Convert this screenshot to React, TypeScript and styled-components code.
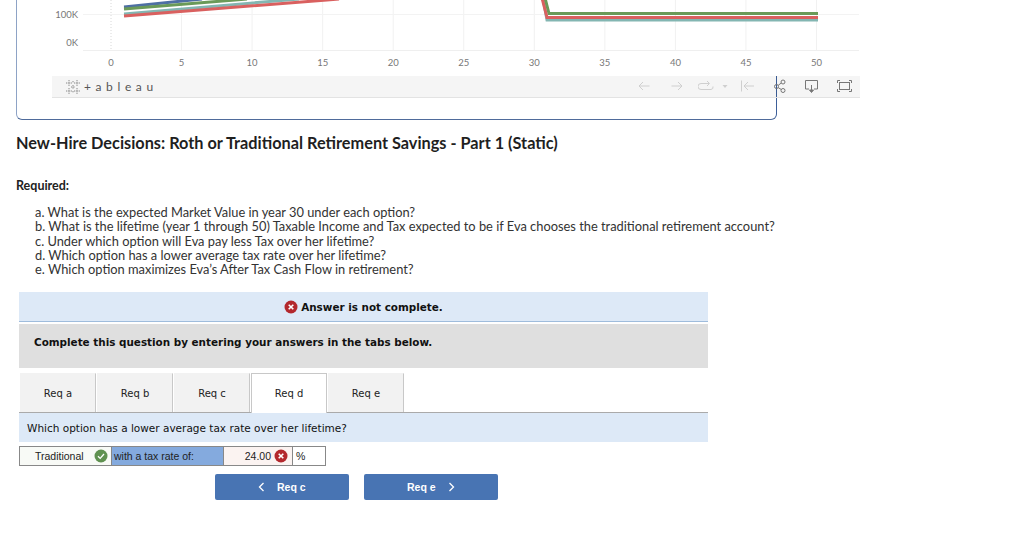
import * as React from 'react';
import styled, { createGlobalStyle } from 'styled-components';

const GlobalStyle = createGlobalStyle`
  html, body {
    margin: 0;
    padding: 0;
    background: #fff;
    overflow: hidden;
  }
`
const Page = styled.div`
  width: 1024px;
  height: 534px;
  overflow: hidden;
  padding-left: 16px;
  box-sizing: border-box;
  font-family: "Lato", sans-serif;
  color: #222;
`
const VizCard = styled.div`
  width: 761px;
  height: 120px;
  box-sizing: border-box;
  border: 1px solid #8ea3c6;
  border-top: 0;
  border-right-color: #3d5f99;
  border-bottom-color: #4f6b9b;
  border-radius: 0 0 6px 6px;
  padding-left: 35px;
`
const Viz = styled.div`
  width: 808px;
`
const ChartSvg = styled.svg`
  display: block;
  background: #fff;
  font-family: "Lato", sans-serif;
`
const Toolbar = styled.div`
  height: 22px;
  box-sizing: border-box;
  background: rgba(0, 0, 0, 0.04);
  border-bottom: 1px solid #e3e3e3;
  display: flex;
  align-items: center;
  padding-left: 14px;
  color: #555;
`
const Brand = styled.span`
  margin-left: 4px;
  font: 400 12px "Lato", sans-serif;
  letter-spacing: 4.6px;
  color: #555;
`
const ToolIcons = styled.div`
  margin-left: auto;
  display: flex;
  align-items: center;
  margin-top: -1px;
`
const Title = styled.h2`
  margin: 13px 0 0;
  font-size: 16.3px;
  line-height: 20px;
  font-weight: 700;
  color: #1f1f1f;
`
const Required = styled.div`
  margin-top: 25px;
  font-size: 12.5px;
  line-height: 16px;
  font-weight: 700;
`
const QuestionList = styled.ol`
  list-style: none;
  margin: 11px 0 0;
  padding: 0 0 0 19px;
  font-size: 12.85px;
  line-height: 14.25px;
  color: #333;
`
const Panel = styled.div`
  width: 689px;
  margin: 16px 0 0 3px;
`
const Notice = styled.div`
  height: 30px;
  box-sizing: border-box;
  background: #dde9f7;
  border-bottom: 1px solid #9fbcdc;
  display: flex;
  align-items: center;
  justify-content: center;
  gap: 3px;
  font: 700 10.4px "DejaVu Sans", sans-serif;
  color: #111;
`
const Instructions = styled.div`
  height: 44px;
  margin-top: 2px;
  box-sizing: border-box;
  background: #dfdfdf;
  padding: 11px 0 0 15px;
  font: 700 10.4px/14px "DejaVu Sans", sans-serif;
  color: #111;
`
const Tabs = styled.div`
  display: flex;
  gap: 1px;
  margin-top: 5px;
  height: 39px;
  padding-left: 1px;
  border-bottom: 1px solid #aaa;
`
const Tab = styled.div<{ $active?: boolean }>`
  width: 76px;
  height: ${p => (p.$active ? '40px' : '39px')};
  box-sizing: border-box;
  background: ${p => (p.$active ? '#fff' : '#f2f2f2')};
  border: 1px solid ${p => (p.$active ? '#c8c8c8' : '#f2f2f2')};
  border-right-color: #c8c8c8;
  border-bottom: 0;
  display: flex;
  align-items: center;
  justify-content: center;
  font: 400 10px "DejaVu Sans", sans-serif;
  color: #222;
`
const Prompt = styled.div`
  height: 29px;
  background: #dde9f7;
  display: flex;
  align-items: center;
  padding-left: 8px;
  font: 400 10.5px "DejaVu Sans", sans-serif;
  color: #111;
`
const AnswerRow = styled.div`
  display: flex;
  width: 307px;
  height: 20px;
  margin-top: 4px;
  box-sizing: border-box;
  border: 1px solid #888;
  font: 400 10.5px "Liberation Sans", sans-serif;
  color: #222;
`
const Cell = styled.div<{ $width: number; $bg: string }>`
  width: ${p => p.$width}px;
  background: ${p => p.$bg};
  display: flex;
  align-items: center;
  box-sizing: border-box;
  border-right: 1px solid #888;
  &:last-child { border-right: 0; }
`
const TraditionalCell = styled(Cell)`
  padding-left: 15px;
  gap: 10px;
`
const LabelCell = styled(Cell)`
  padding-left: 2px;
`
const RateCell = styled(Cell)`
  justify-content: flex-end;
  padding-right: 4px;
  gap: 3px;
`
const UnitCell = styled(Cell)`
  padding-left: 3px;
`
const Buttons = styled.div`
  display: flex;
  gap: 15.5px;
  margin: 8px 0 0 196px;
`
const NavButton = styled.button`
  width: 133.5px;
  height: 26px;
  border: 0;
  border-radius: 2px;
  background: #4874b3;
  color: #fff;
  font: 700 10.5px "Liberation Sans", sans-serif;
  display: flex;
  align-items: center;
  justify-content: center;
  gap: 12px;
  padding: 0;
`

const xFor = (year: number) => 59 + year * 14.11
const ticks = [0, 5, 10, 15, 20, 25, 30, 35, 40, 45, 50]

const Chart = () => (
  <ChartSvg width={808} height={76} viewBox="0 0 808 76">
    {ticks.slice(1).map(t => (
      <line key={t} x1={xFor(t)} x2={xFor(t)} y1={0} y2={51} stroke="#f1f1f1" />
    ))}
    <line x1={xFor(0)} x2={xFor(0)} y1={0} y2={51} stroke="#d8d8d8" strokeDasharray="1 2" />
    <line x1={31} x2={807} y1={14.5} y2={14.5} stroke="#f3f3f3" />
    <line x1={31} x2={807} y1={50.5} y2={50.5} stroke="#efefef" />
    <g fill="none" strokeWidth={3}>
      <polyline stroke="#4e6fa3" points="72,7 140,0 150,-1" />
      <polyline stroke="#6a9a58" points="72,9 183,0 195,-1" />
      <polyline stroke="#83b6b2" points="72,14 235,0 247,-1" />
      <polyline stroke="#d9605f" points="72,16 275,0 287,-1" />
      <polyline stroke="#83b6b2" points="491,-2 495,20 766,20" />
      <polyline stroke="#6a9a58" points="493,-2 497,13.500 766,13.500" />
      <polyline stroke="#d9605f" points="490,-2 495,17.500 766,17.500" />
    </g>
    <g fontSize="9.5" fill="#777" textAnchor="end">
      <text x={26} y={18}>100K</text>
      <text x={26} y={46}>0K</text>
    </g>
    <g fontSize="9.5" fill="#777" textAnchor="middle">
      {ticks.map(t => (
        <text key={t} x={xFor(t)} y={66}>{t}</text>
      ))}
    </g>
  </ChartSvg>
)

const TableauMark = () => (
  <svg width="14" height="14" viewBox="0 0 14 14" stroke="#888" strokeWidth="1" fill="none" strokeDasharray="1 0.7">
    <path d="M3 0v6M0 3h6M11 0v6M8 3h6M3 8v6M0 11h6M11 8v6M8 11h6M7 1v2M7 5v4M7 11v2M5 7h4" />
  </svg>
)

const IconSvg = styled.svg<{ $dim?: boolean; $gap: number }>`
  fill: none;
  stroke: ${p => (p.$dim ? '#cfcfcf' : '#777')};
  stroke-width: 1;
  margin-right: ${p => p.$gap}px;
`

const ToolIcon = ({ width, gap, dim, children }: { width: number; gap: number; dim?: boolean; children: React.ReactNode }) => (
  <IconSvg width={width} height="16" viewBox={`0 0 ${width} 16`} $dim={dim} $gap={gap}>
    {children}
  </IconSvg>
)

const ToolbarIcons = () => (
  <ToolIcons>
    <ToolIcon width={12} gap={21} dim><path d="M11.500 8H1M5 4L1 8l4 4" /></ToolIcon>
    <ToolIcon width={12} gap={15} dim><path d="M.5 8H11M7 4l4 4-4 4" /></ToolIcon>
    <ToolIcon width={16} gap={8} dim><path d="M11 5.500H3a2.500 2.500 0 0 0 0 6h10a2.500 2.500 0 0 0 2-3M9 3l2.500 2.500L9 8" /></ToolIcon>
    <ToolIcon width={6} gap={13} dim><path d="M.5 7h5L3 10z" fill="#cfcfcf" stroke="none" /></ToolIcon>
    <ToolIcon width={13} gap={20} dim><path d="M.5 2.500v11M13 8H3M7 4L3 8l4 4" /></ToolIcon>
    <ToolIcon width={12} gap={19}><circle cx="2.500" cy="8.500" r="2" /><circle cx="9" cy="4" r="2" /><circle cx="9" cy="12.500" r="2" /><path d="M4.200 7.300l3-2.200M4.200 9.700l3 1.700" /></ToolIcon>
    <ToolIcon width={14} gap={18}><path d="M4 11H.5V2.500h12V11H9" /><path d="M6.500 7v7" /><path d="M4.500 12l2 2.500 2-2.500z" fill="#777" /></ToolIcon>
    <ToolIcon width={15} gap={8}><rect x="2.500" y="4.500" width="10" height="7" /><path d="M.5 5V2.500H3M12 2.500h2.500V5M14.500 11v2.500H12M3 13.500H.5V11" /></ToolIcon>
  </ToolIcons>
)

const StatusIcon = ({ ok }: { ok?: boolean }) => (
  <svg width="14" height="14" viewBox="0 0 14 14">
    <circle cx="7" cy="7" r="6.500" fill={ok ? '#5f9150' : '#b3282d'} />
    {ok ? (
      <path d="M4 7.200l2.200 2.200L10 5" fill="none" stroke="#fff" strokeWidth="1.300" />
    ) : (
      <path d="M4.700 4.700l4.600 4.600M9.300 4.700l-4.600 4.600" fill="none" stroke="#fff" strokeWidth="1.600" />
    )}
  </svg>
)

const Chevron = ({ left }: { left?: boolean }) => (
  <svg width="7" height="10" viewBox="0 0 7 10" fill="none" stroke="#fff" strokeWidth="1.300">
    <path d={left ? 'M5.500 1L1.500 5l4 4' : 'M1.500 1l4 4-4 4'} />
  </svg>
)

const questions = [
  'a. What is the expected Market Value in year 30 under each option?',
  'b. What is the lifetime (year 1 through 50) Taxable Income and Tax expected to be if Eva chooses the traditional retirement account?',
  'c. Under which option will Eva pay less Tax over her lifetime?',
  'd. Which option has a lower average tax rate over her lifetime?',
  'e. Which option maximizes Eva’s After Tax Cash Flow in retirement?',
]

const tabs = ['Req a', 'Req b', 'Req c', 'Req d', 'Req e']

export default function App() {
  return (
    <Page>
      <GlobalStyle />
      <VizCard>
        <Viz>
          <Chart />
          <Toolbar>
            <TableauMark />
            <Brand>+ableau</Brand>
            <ToolbarIcons />
          </Toolbar>
        </Viz>
      </VizCard>
      <Title>New-Hire Decisions: Roth or Traditional Retirement Savings - Part 1 (Static)</Title>
      <Required>Required:</Required>
      <QuestionList>
        {questions.map(q => <li key={q}>{q}</li>)}
      </QuestionList>
      <Panel>
        <Notice><StatusIcon /> Answer is not complete.</Notice>
        <Instructions>Complete this question by entering your answers in the tabs below.</Instructions>
        <Tabs>
          {tabs.map(t => <Tab key={t} $active={t === 'Req d'}>{t}</Tab>)}
        </Tabs>
        <Prompt>Which option has a lower average tax rate over her lifetime?</Prompt>
        <AnswerRow>
          <TraditionalCell $width={92} $bg="#f8faf6">Traditional <StatusIcon ok /></TraditionalCell>
          <LabelCell $width={112} $bg="#84aade">with a tax rate of:</LabelCell>
          <RateCell $width={69} $bg="#fbf3f1">24.00 <StatusIcon /></RateCell>
          <UnitCell $width={32} $bg="#fff">%</UnitCell>
        </AnswerRow>
        <Buttons>
          <NavButton><Chevron left /> Req c</NavButton>
          <NavButton>Req e <Chevron /></NavButton>
        </Buttons>
      </Panel>
    </Page>
  );
}
